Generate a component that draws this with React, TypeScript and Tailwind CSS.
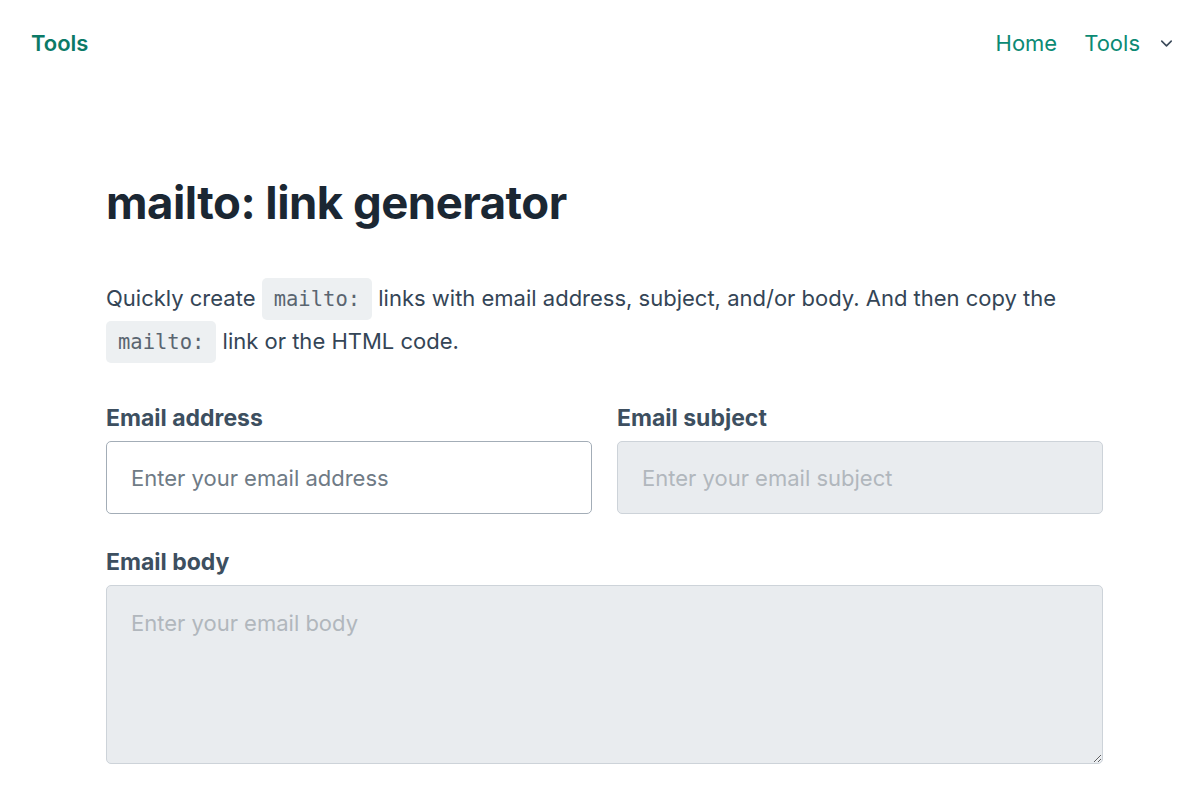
import { ChevronDown } from "lucide-react";

const Code = ({ children }: { children: string }) => (
  <code className="rounded-[5px] bg-[#edf0f2] px-[12px] py-[9px] font-['DejaVu_Sans_Mono',monospace] text-[20.5px] leading-[20px] text-[#5a6570]">
    {children}
  </code>
);

const Header = () => (
  <header className="flex items-center justify-between pl-[31px] pr-[24px] pt-[27px]">
    <a className="text-[22px] font-semibold text-[#0b7a67]">Tools</a>
    <nav className="flex items-center text-[22px] text-[#0b8a74]">
      <a className="mr-[27px]">Home</a>
      <a>Tools</a>
      <ChevronDown className="ml-[17px] h-[19px] w-[19px] text-[#3b4a5a]" strokeWidth={2} />
    </nav>
  </header>
);

export default function App() {
  return (
    <div className="min-h-screen bg-white font-['Inter',sans-serif] text-[#344556]">
      <Header />
      <main className="ml-[106px] w-[997px] pt-[115px]">
        <h1 className="text-[45.5px] font-bold leading-[56px] tracking-[-0.5px] text-[#1b2733]">
          mailto: link generator
        </h1>
        <p className="mt-[46px] text-[22px] leading-[43px] text-[#344556]">
          Quickly create <Code>mailto:</Code> links with email address, subject, and/or body. And then copy the{" "}
          <Code>mailto:</Code> link or the HTML code.
        </p>
        <form className="mt-[41px] flex flex-col">
          <div className="grid grid-cols-2 gap-[25px]">
            <label className="flex flex-col">
              <span className="text-[23px] font-bold leading-[28px] text-[#3d4f60]">Email address</span>
              <input
                type="email"
                placeholder="Enter your email address"
                className="mt-[9px] h-[73px] rounded-[5px] border border-[#a3adb7] bg-white px-[24px] text-[22px] text-[#344556] placeholder:text-[#6f7b86] outline-none"
              />
            </label>
            <label className="flex flex-col">
              <span className="text-[23px] font-bold leading-[28px] text-[#3d4f60]">Email subject</span>
              <input
                type="text"
                disabled
                placeholder="Enter your email subject"
                className="mt-[9px] h-[73px] rounded-[5px] border border-[#cdd3d9] bg-[#e9ecef] px-[24px] text-[22px] placeholder:text-[#b1b7bd] outline-none"
              />
            </label>
          </div>
          <label className="mt-[34px] flex flex-col">
            <span className="text-[23px] font-bold leading-[28px] text-[#3d4f60]">Email body</span>
            <textarea
              disabled
              placeholder="Enter your email body"
              className="mt-[9px] h-[179px] resize-y rounded-[5px] border border-[#cdd3d9] bg-[#e9ecef] px-[24px] py-[22px] text-[22px] leading-[30px] placeholder:text-[#b1b7bd] outline-none"
            />
          </label>
        </form>
      </main>
    </div>
  );
}
